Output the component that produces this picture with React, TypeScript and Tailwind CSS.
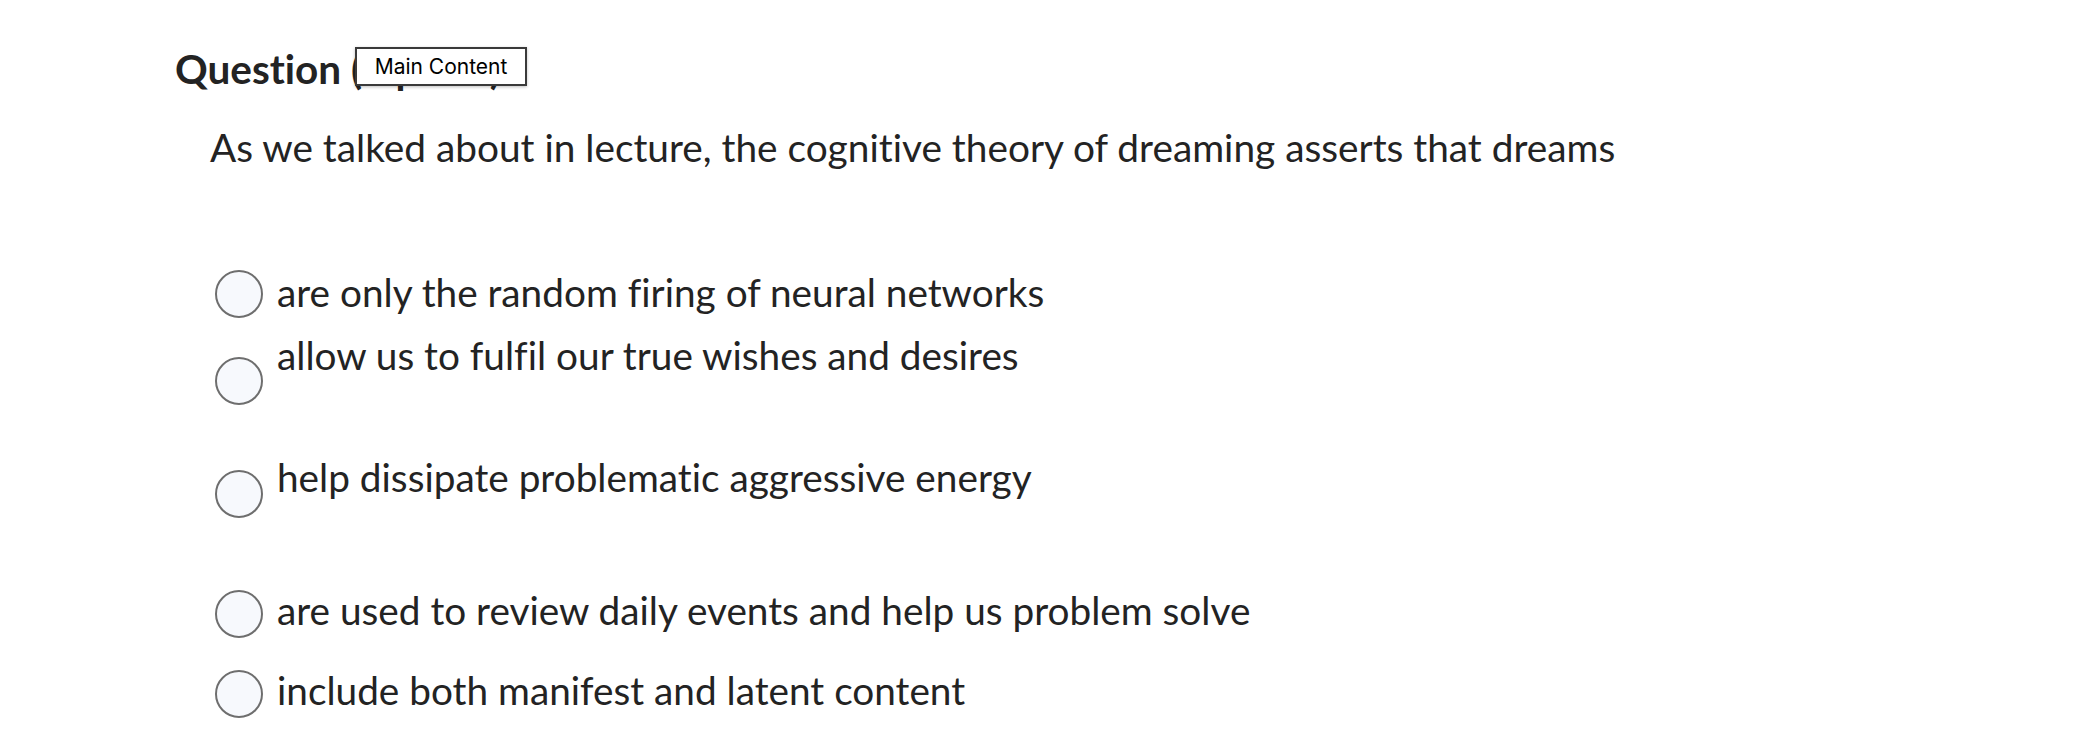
import React from "react";

type Choice = {
  label: string;
  top: string; // spacing above the row
  dot: string; // offset of the radio from the top of the label line
};

const choices: Choice[] = [
  { label: "are only the random firing of neural networks", top: "mt-[98px]", dot: "mt-[2px]" },
  { label: "allow us to fulfil our true wishes and desires", top: "mt-[15px]", dot: "mt-[26px]" },
  { label: "help dissipate problematic aggressive energy", top: "mt-[74px]", dot: "mt-[17px]" },
  { label: "are used to review daily events and help us problem solve", top: "mt-[85px]", dot: "mt-[4px]" },
  { label: "include both manifest and latent content", top: "mt-[32px]", dot: "mt-[4px]" },
];

function Radio({ offset }: { offset: string }) {
  return (
    <span
      className={`shrink-0 w-[48px] h-[48px] rounded-full border-2 border-[#6e6e6e] bg-[#f7f9fd] ${offset}`}
    />
  );
}

export default function App() {
  return (
    <div
      className="w-[2086px] h-[740px] bg-white overflow-hidden text-[#232323] [font-variant-ligatures:none]"
      style={{ fontFamily: "Lato, 'Noto Sans', sans-serif" }}
    >
      <div className="pl-[175px] pt-[45px]">
        <h2 className="relative inline-block font-bold text-[40.5px] leading-[1.2]">
          Question (1 point)
          {/* skip-link tooltip laid over the heading */}
          <span
            className="absolute left-[180px] top-[2px] w-[172px] h-[39px] flex items-center justify-center bg-white border-2 border-[#3a3a3a] shadow-[0_1px_3px_rgba(0,0,0,0.25)] text-black text-[21px] font-normal leading-none"
            style={{ fontFamily: "Inter, 'Liberation Sans', sans-serif" }}
          >
            Main Content
          </span>
        </h2>

        <p className="pl-[35px] mt-[30px] text-[38.8px] leading-[1.2]">
          As we talked about in lecture, the cognitive theory of dreaming asserts that dreams
        </p>

        <div className="flex flex-col pl-[40px]">
          {choices.map((c) => (
            <label key={c.label} className={`flex items-start gap-[14px] h-[48px] ${c.top}`}>
              <Radio offset={c.dot} />
              <span className="text-[38.75px] leading-[48px] whitespace-nowrap">{c.label}</span>
            </label>
          ))}
        </div>
      </div>
    </div>
  );
}
